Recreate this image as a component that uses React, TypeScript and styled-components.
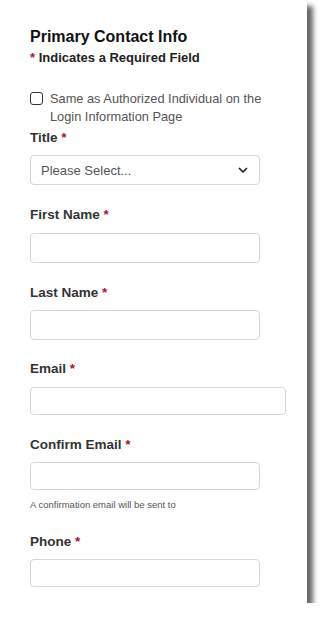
import styled, { createGlobalStyle } from "styled-components";

const GlobalStyle = createGlobalStyle`
  html, body {
    margin: 0;
    padding: 0;
    background: #ffffff;
  }
  body {
    font-family: "Liberation Sans", Arial, sans-serif;
  }
`;

const Card = styled.div`
  width: 307px;
  height: 603px;
  box-sizing: border-box;
  background: #ffffff;
  box-shadow: 6px 6px 5px rgba(0, 0, 0, 0.6);
  padding: 27px 0 0 30px;
  display: flex;
  flex-direction: column;
`;

const Heading = styled.h2`
  margin: 0;
  font-size: 16px;
  line-height: 20px;
  font-weight: bold;
  color: #111;
`;

const Required = styled.p`
  margin: 2.5px 0 0 0;
  font-size: 13px;
  line-height: 16px;
  font-weight: bold;
  color: #222;
`;

const Star = styled.span`
  color: #a8123f;
`;

const CheckRow = styled.label`
  display: flex;
  align-items: flex-start;
  gap: 7px;
  margin-top: 24px;
  font-size: 12.8px;
  line-height: 18px;
  color: #555;
  width: 250px;
`;

const Box = styled.span`
  flex: none;
  width: 11px;
  height: 11px;
  margin-top: 2.5px;
  border: 1.5px solid #333;
  border-radius: 3px;
  background: #fff;
`;

const Field = styled.div<{ $first?: boolean; $gap?: number }>`
  display: flex;
  flex-direction: column;
  margin-top: ${(p) => (p.$first ? 3 : p.$gap ?? 21)}px;
`;

const Label = styled.div`
  font-size: 13.5px;
  line-height: 18px;
  font-weight: bold;
  color: #333;
  margin-bottom: 8.5px;
`;

const Input = styled.div<{ $width?: number; $height?: number }>`
  box-sizing: border-box;
  width: ${(p) => p.$width ?? 230}px;
  height: ${(p) => p.$height ?? 30}px;
  border: 1px solid #d6d6d6;
  border-radius: 4px;
  background: #fff;
`;

const Select = styled(Input)`
  display: flex;
  align-items: center;
  justify-content: space-between;
  padding: 0 11px 0 10px;
  font-size: 13px;
  color: #555;
`;

const Help = styled.div`
  margin-top: 9px;
  font-size: 9.5px;
  line-height: 12px;
  color: #555;
`;

const Chevron = () => (
  <svg width="10" height="7" viewBox="0 0 10 7">
    <path d="M1.5 1.5 L5 5 L8.5 1.5" fill="none" stroke="#222" strokeWidth="1.7" strokeLinecap="round" strokeLinejoin="round" />
  </svg>
);

export default function App() {
  return (
    <>
      <GlobalStyle />
      <Card>
        <Heading>Primary Contact Info</Heading>
        <Required>
          <Star>*</Star> Indicates a Required Field
        </Required>
        <CheckRow>
          <Box />
          <span>Same as Authorized Individual on the Login Information Page</span>
        </CheckRow>
        <Field $first>
          <Label>
            Title <Star>*</Star>
          </Label>
          <Select>
            <span>Please Select...</span>
            <Chevron />
          </Select>
        </Field>
        <Field>
          <Label>
            First Name <Star>*</Star>
          </Label>
          <Input />
        </Field>
        <Field>
          <Label>
            Last Name <Star>*</Star>
          </Label>
          <Input />
        </Field>
        <Field $gap={20}>
          <Label>
            Email <Star>*</Star>
          </Label>
          <Input $width={256} $height={28} />
        </Field>
        <Field>
          <Label>
            Confirm Email <Star>*</Star>
          </Label>
          <Input $height={28} />
          <Help>A confirmation email will be sent to</Help>
        </Field>
        <Field $gap={21.5}>
          <Label>
            Phone <Star>*</Star>
          </Label>
          <Input $height={28} />
        </Field>
      </Card>
    </>
  );
}
